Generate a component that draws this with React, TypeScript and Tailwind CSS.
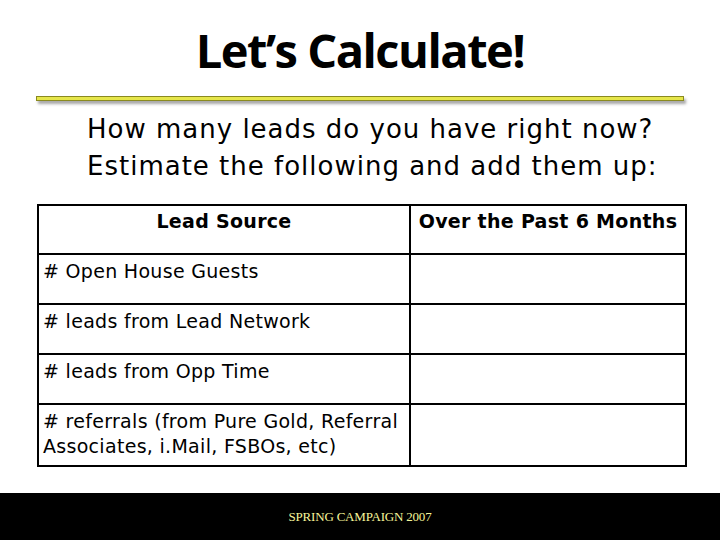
export default function App() {
  const rows = [
    ['# Open House Guests'],
    ['# leads from Lead Network'],
    ['# leads from Opp Time'],
    ['# referrals (from Pure Gold, Referral', 'Associates, i.Mail, FSBOs, etc)'],
  ]

  return (
    <div className="w-[720px] h-[540px] bg-white flex flex-col overflow-hidden">
      <h1 className="h-[96px] pt-[24px] text-center text-[47px] leading-[52px] font-bold tracking-[-1.5px] text-black [font-family:'Open_Sans',sans-serif]">
        Let’s Calculate!
      </h1>

      <div className="mx-[36px] h-[5px] bg-[#e6e64a] border border-[#8a8a20] shadow-[2px_3px_3px_rgba(0,0,0,0.35)]" />

      <div className="pl-[87px] pt-[10px] text-[26px] leading-[37px] tracking-[1px] text-black [font-family:'DejaVu_Sans',sans-serif]">
        <p>How many leads do you have right now?</p>
        <p>Estimate the following and add them up:</p>
      </div>

      <table className="ml-[37px] mt-[19px] w-[650px] border-collapse border-2 border-black text-[19px] leading-[25px] tracking-[0.3px] text-black [font-family:'DejaVu_Sans',sans-serif]">
        <thead>
          <tr className="h-[49px]">
            <th className="w-[372px] border-2 border-black align-top pt-[3px] font-bold">Lead Source</th>
            <th className="border-2 border-black align-top pt-[3px] font-bold">Over the Past 6 Months</th>
          </tr>
        </thead>
        <tbody>
          {rows.map((r, i) => (
            <tr key={i} className={i === 3 ? 'h-[62px]' : 'h-[50px]'}>
              <td className="border-2 border-black align-top pt-[4px] pl-[4px]">
                {r.map((line) => (
                  <div key={line}>{line}</div>
                ))}
              </td>
              <td className="border-2 border-black" />
            </tr>
          ))}
        </tbody>
      </table>

      <div className="mt-auto h-[47px] bg-black flex items-center justify-center">
        <span className="text-[13px] tracking-[-0.2px] text-[#f5f59a] uppercase [font-family:'Liberation_Serif',serif]">
          Spring Campaign 2007
        </span>
      </div>
    </div>
  )
}
